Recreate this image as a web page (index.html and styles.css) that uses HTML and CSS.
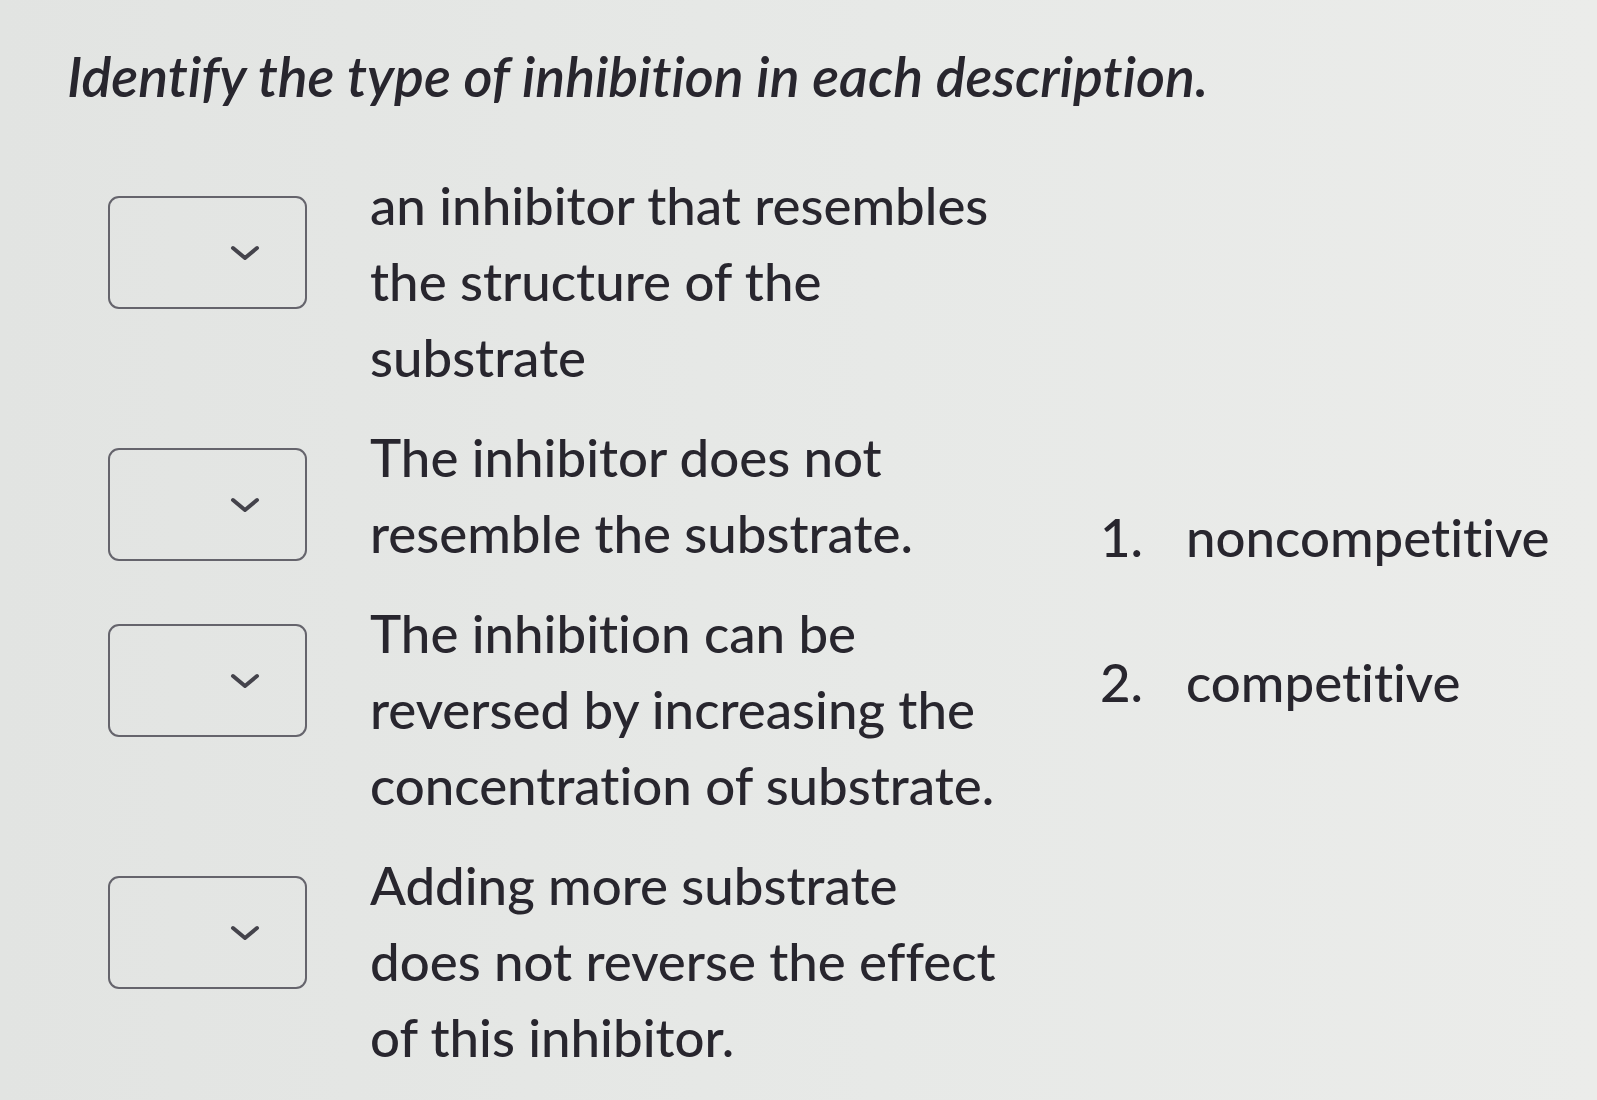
FILE: index.html
```html
<!DOCTYPE html>
<html lang="en">

<head>
    <meta charset="UTF-8">
    <title>Identify the type of inhibition</title>
    <link rel="stylesheet" href="styles.css">
</head>

<body>
    <div class="page">
        <h1 class="prompt">Identify the type of inhibition in each description.</h1>

        <div class="board">
            <div class="questions">
                <div class="item">
                    <div class="select">
                        <svg class="chev" width="32" height="18" viewBox="0 0 32 18"><polyline points="4,4 16,14 28,4" /></svg>
                    </div>
                    <p class="desc">an inhibitor that resembles<br>the structure of the<br>substrate</p>
                </div>
                <div class="item">
                    <div class="select">
                        <svg class="chev" width="32" height="18" viewBox="0 0 32 18"><polyline points="4,4 16,14 28,4" /></svg>
                    </div>
                    <p class="desc">The inhibitor does not<br>resemble the substrate.</p>
                </div>
                <div class="item">
                    <div class="select">
                        <svg class="chev" width="32" height="18" viewBox="0 0 32 18"><polyline points="4,4 16,14 28,4" /></svg>
                    </div>
                    <p class="desc">The inhibition can be<br>reversed by increasing the<br>concentration of substrate.</p>
                </div>
                <div class="item">
                    <div class="select">
                        <svg class="chev" width="32" height="18" viewBox="0 0 32 18"><polyline points="4,4 16,14 28,4" /></svg>
                    </div>
                    <p class="desc">Adding more substrate<br>does not reverse the effect<br>of this inhibitor.</p>
                </div>
            </div>

            <ol class="answers">
                <li><span class="num">1.</span><span>noncompetitive</span></li>
                <li><span class="num">2.</span><span>competitive</span></li>
            </ol>
        </div>
    </div>
</body>

</html>
```

FILE: styles.css
```css
* {
    margin: 0;
    padding: 0;
}

body {
    background: linear-gradient(90deg, #e2e4e2 0%, #e7e9e7 55%, #ebecea 100%);
    color: #28262e;
    font-family: Lato, "Open Sans", sans-serif;
    font-variant-ligatures: none;
    height: 1100px;
    overflow: hidden;
}

.page {
    padding: 43px 0 0 67px;
}

.prompt {
    font-size: 55.8px;
    font-style: italic;
    font-weight: 600;
    line-height: 66px;
}

.board {
    display: grid;
    grid-template-columns: 1033px auto;
    margin-top: 58px;
}

.questions {
    display: flex;
    flex-direction: column;
    gap: 24px;
}

.item {
    display: flex;
    align-items: flex-start;
}

.select {
    width: 199px;
    height: 113px;
    box-sizing: border-box;
    margin: 29px 0 0 41px;

    border: 2.5px solid #65646c;
    border-radius: 11px;

    display: flex;
    align-items: center;
    padding-left: 119px;
}

.chev polyline {
    fill: none;
    stroke: #44434b;
    stroke-width: 4;
    stroke-linecap: round;
    stroke-linejoin: round;
}

.desc {
    margin-left: 63px;
    font-size: 52.8px;
    font-weight: 500;
    line-height: 76px;
}

.answers {
    list-style: none;
    padding-top: 332px;
    font-size: 52.8px;
    font-weight: 500;
    line-height: 76px;
}

.answers li {
    display: flex;
    margin-bottom: 69px;
}

.answers .num {
    width: 86px;
}
```
